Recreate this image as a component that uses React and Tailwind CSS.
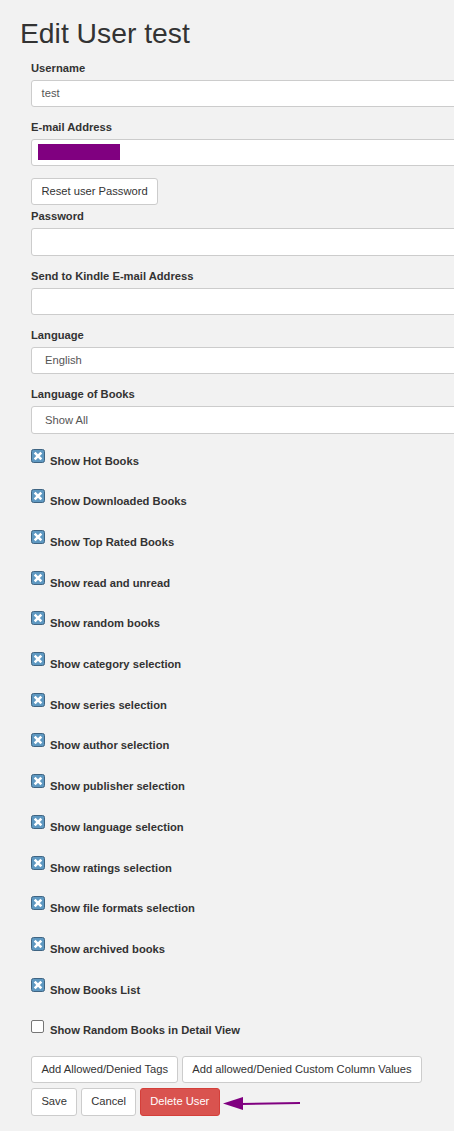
const fields = [
  { label: "Username", value: "test" },
  { label: "E-mail Address", redacted: true },
];

const checks = [
  "Show Hot Books",
  "Show Downloaded Books",
  "Show Top Rated Books",
  "Show read and unread",
  "Show random books",
  "Show category selection",
  "Show series selection",
  "Show author selection",
  "Show publisher selection",
  "Show language selection",
  "Show ratings selection",
  "Show file formats selection",
  "Show archived books",
  "Show Books List",
];

const Label = ({ children }) => (
  <label className="block text-[11.2px] font-bold leading-[16px] mb-[4px] text-[#333]">{children}</label>
);

const Input = ({ children, select }) => (
  <div
    className={`h-[27.3px] w-[560px] bg-white border border-[#ccc] rounded-[3px] flex items-center text-[11.2px] text-[#555] ${
      select ? "pl-[13px]" : "pl-[9.6px]"
    }`}
  >
    {children}
  </div>
);

const Btn = ({ children, danger }) => (
  <button
    className={`h-[27.2px] px-[9.4px] rounded-[3px] border text-[11.2px] leading-none ${
      danger ? "bg-[#d9534f] border-[#d43f3a] text-white" : "bg-white border-[#ccc] text-[#333]"
    }`}
  >
    {children}
  </button>
);

const Checked = () => (
  <svg width="14" height="14" viewBox="0 0 14 14" className="shrink-0">
    <rect x="0.5" y="0.5" width="13" height="13" rx="2" fill="#5e98c1" stroke="#3f6482" />
    <path d="M4.6 4.6 L9.4 9.4 M9.4 4.6 L4.6 9.4" stroke="white" strokeWidth="2.6" strokeLinecap="square" />
  </svg>
);

export default function App() {
  return (
    <div className="w-[454px] min-h-[1131px] overflow-hidden bg-[#f2f2f2] text-[#333]" style={{ fontFamily: '"Liberation Sans", Arial, sans-serif' }}>
      <h1 className="pl-[20px] pt-[17px] mb-[10.5px] text-[28.3px] leading-[32px] text-[#333]">Edit User test</h1>
      <div className="pl-[31px]">
        {fields.map((f) => (
          <div key={f.label} className="mb-[12px]">
            <Label>{f.label}</Label>
            <Input>
              {f.redacted ? <span className="block w-[82px] h-[16px] bg-[#800080] -ml-[4px]" /> : f.value}
            </Input>
          </div>
        ))}
        <div className="mb-[3.2px]">
          <Btn>Reset user Password</Btn>
        </div>
        <div className="mb-[12px]">
          <Label>Password</Label>
          <Input />
        </div>
        <div className="mb-[12px]">
          <Label>Send to Kindle E-mail Address</Label>
          <Input />
        </div>
        <div className="mb-[12px]">
          <Label>Language</Label>
          <Input select>English</Input>
        </div>
        <div className="mb-[12px]">
          <Label>Language of Books</Label>
          <Input select>Show All</Input>
        </div>

        <div className="flex flex-col gap-[20.7px] pt-[3px]">
          {checks.map((c) => (
            <div key={c} className="h-[20px] flex items-start gap-[5px]">
              <Checked />
              <span className="mt-[4px] text-[11.2px] font-bold leading-[16px]">{c}</span>
            </div>
          ))}
          <div className="h-[20px] flex items-start gap-[5px]">
            <span className="mt-[1.5px] block w-[13px] h-[13px] bg-white border border-[#767676] rounded-[2px] shrink-0" />
            <span className="mt-[4px] ml-[1px] text-[11.2px] font-bold leading-[16px]">Show Random Books in Detail View</span>
          </div>
        </div>

        <div className="mt-[18px] flex gap-[3.5px]">
          <Btn>Add Allowed/Denied Tags</Btn>
          <Btn>Add allowed/Denied Custom Column Values</Btn>
        </div>
        <div className="mt-[5px] flex items-center gap-[3.5px]">
          <Btn>Save</Btn>
          <Btn>Cancel</Btn>
          <Btn danger>Delete User</Btn>
          <svg width="77" height="14" viewBox="0 0 77 14" className="mt-[3px]">
            <path d="M0 6.5 L20 0 L20 13 Z" fill="#800080" />
            <path d="M18 7 L77 6" stroke="#800080" strokeWidth="2" />
          </svg>
        </div>
      </div>
    </div>
  );
}
